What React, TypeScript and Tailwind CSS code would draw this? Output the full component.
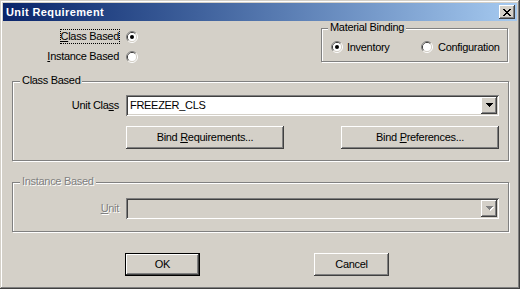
import type { ReactNode } from 'react';
import clsx from 'clsx';

const raised =
  'shadow-[inset_-1px_-1px_0_#404040,inset_1px_1px_0_#fff,inset_-2px_-2px_0_#808080,inset_2px_2px_0_#d4d0c8]';
const sunken =
  'shadow-[inset_1px_1px_0_#808080,inset_-1px_-1px_0_#fff,inset_2px_2px_0_#404040,inset_-2px_-2px_0_#d4d0c8]';
const etched = 'text-[#808080] [text-shadow:1px_1px_0_#fff]';

function Radio({ checked }: { checked?: boolean }) {
  return (
    <svg width="12" height="12" viewBox="0 0 12 12" className="shrink-0">
      <path d="M2.11 9.89A5.5 5.5 0 0 1 9.89 2.11" stroke="#808080" fill="none" />
      <path d="M9.89 2.11A5.5 5.5 0 0 1 2.11 9.89" stroke="#fff" fill="none" />
      <path d="M2.82 9.18A4.5 4.5 0 0 1 9.18 2.82" stroke="#404040" fill="none" />
      <path d="M9.18 2.82A4.5 4.5 0 0 1 2.82 9.18" stroke="#d4d0c8" fill="none" />
      <circle cx="6" cy="6" r="4" fill="#fff" />
      {checked && <circle cx="6" cy="6" r="2" fill="#000" />}
    </svg>
  );
}

function Arrow({ disabled }: { disabled?: boolean }) {
  const fill = disabled ? '#808080' : '#000';
  return (
    <svg width="8" height="5" viewBox="0 0 8 5" shapeRendering="crispEdges">
      {disabled && <path d="M1 1h7v1H1zM2 2h5v1H2zM3 3h3v1H3zM4 4h1v1H4z" fill="#fff" />}
      <path d="M0 0h7v1H0zM1 1h5v1H1zM2 2h3v1H2zM3 3h1v1H3z" fill={fill} />
    </svg>
  );
}

function Combo({ value, disabled }: { value?: string; disabled?: boolean }) {
  return (
    <div className={clsx('flex h-[21px] w-[373px] p-[2px]', sunken, disabled ? 'bg-[#d4d0c8]' : 'bg-white')}>
      <div className="flex flex-1 items-center pl-[2px] leading-[13px]">{value}</div>
      <div className={clsx('flex h-full w-[16px] items-center justify-center bg-[#d4d0c8] pl-[1px]', raised)}>
        <Arrow disabled={disabled} />
      </div>
    </div>
  );
}

function Button({ children, primary, className }: { children: ReactNode; primary?: boolean; className?: string }) {
  return (
    <div className={clsx('h-[23px] bg-[#d4d0c8]', primary && 'border border-black', className)}>
      <div className={clsx('flex h-full w-full items-center justify-center leading-[13px]', raised)}>
        {children}
      </div>
    </div>
  );
}

function Group({
  label,
  disabled,
  labelLeft,
  className,
  children,
}: {
  label: string;
  disabled?: boolean;
  labelLeft: string;
  className?: string;
  children: ReactNode;
}) {
  return (
    <div className={clsx('relative border border-[#808080] shadow-[inset_1px_1px_0_#fff,1px_1px_0_#fff]', className)}>
      <span
        className={clsx(
          'absolute -top-[8px] bg-[#d4d0c8] px-[2px] leading-[13px] whitespace-nowrap',
          labelLeft,
          disabled && etched,
        )}
      >
        {label}
      </span>
      {children}
    </div>
  );
}

export default function App() {
  return (
    <div className="h-[289px] w-[520px] bg-[#d4d0c8] p-[3px] font-['Liberation_Sans',Arial,sans-serif] text-[11px] tracking-[-0.3px] text-black shadow-[inset_-1px_-1px_0_#404040,inset_1px_1px_0_#d4d0c8,inset_-2px_-2px_0_#808080,inset_2px_2px_0_#fff]">
      {/* title bar */}
      <div className="flex h-[18px] items-center bg-linear-to-r from-[#0a246a] to-[#a6caf0] pl-[3px] pr-[2px]">
        <span className="flex-1 font-bold leading-[13px] tracking-[0.4px] text-white">Unit Requirement</span>
        <div className={clsx('flex h-[14px] w-[16px] items-center justify-center bg-[#d4d0c8]', raised)}>
          <svg width="8" height="7" viewBox="0 0 8 7" shapeRendering="crispEdges">
            <path
              d="M0 0h2v1H0zM6 0h2v1H6zM1 1h2v1H1zM5 1h2v1H5zM2 2h4v1H2zM3 3h2v1H3zM2 4h4v1H2zM1 5h2v1H1zM5 5h2v1H5zM0 6h2v1H0zM6 6h2v1H6z"
              fill="#000"
            />
          </svg>
        </div>
      </div>

      <div className="flex flex-col pl-[9px]">
        {/* top row */}
        <div className="flex h-[60px] shrink-0">
          <div className="flex w-[126px] flex-col items-end gap-[5px] pt-[8px]">
            <div className="flex items-center gap-[6px]">
              <span className="border border-dotted border-black leading-[13px]">
                <span className="underline">C</span>lass Based
              </span>
              <Radio checked />
            </div>
            <div className="flex items-center gap-[6px]">
              <span className="border border-transparent leading-[13px]">
                <span className="underline">I</span>nstance Based
              </span>
              <Radio />
            </div>
          </div>
          <Group label="Material Binding" labelLeft="left-[6px]" className="ml-[183px] mt-[7px] h-[34px] w-[187px]">
            <div className="flex h-full items-center pl-[9px] pt-[4px]">
              <div className="flex w-[90px] items-center gap-[4px]">
                <Radio checked />
                <span className="leading-[13px]">Inventory</span>
              </div>
              <div className="flex items-center gap-[5px]">
                <Radio />
                <span className="leading-[13px]">Configuration</span>
              </div>
            </div>
          </Group>
        </div>

        {/* class based */}
        <Group label="Class Based" labelLeft="left-[7px]" className="h-[80px] w-[497px] shrink-0">
          <div className="flex flex-col pt-[13px]">
            <div className="flex items-center">
              <span className="w-[106px] text-right leading-[13px]">
                Unit Cla<span className="underline">s</span>s
              </span>
              <div className="ml-[7px]">
                <Combo value="FREEZER_CLS" />
              </div>
            </div>
            <div className="mt-[10px] flex pl-[113px]">
              <Button className="w-[158px]">
                <span>
                  Bind <span className="underline">R</span>equirements...
                </span>
              </Button>
              <Button className="ml-[57px] w-[158px]">
                <span>
                  Bind <span className="underline">P</span>references...
                </span>
              </Button>
            </div>
          </div>
        </Group>

        {/* instance based */}
        <Group label="Instance Based" disabled labelLeft="left-[7px]" className="mt-[21px] h-[50px] w-[497px] shrink-0">
          <div className="flex items-center pt-[15px]">
            <span className={clsx('w-[106px] text-right leading-[13px]', etched)}>
              <span className="underline">U</span>nit
            </span>
            <div className="ml-[7px]">
              <Combo disabled />
            </div>
          </div>
        </Group>

        {/* dialog buttons */}
        <div className="mt-[21px] flex pl-[113px]">
          <Button primary className="w-[75px]">
            OK
          </Button>
          <Button className="ml-[114px] w-[75px]">Cancel</Button>
        </div>
      </div>
    </div>
  );
}
